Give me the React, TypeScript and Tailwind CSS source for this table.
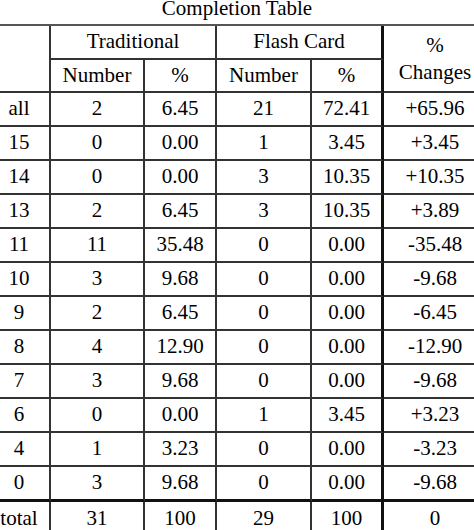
import React from 'react';

const rows: string[][] = [
  ['all', '2', '6.45', '21', '72.41', '+65.96'],
  ['15', '0', '0.00', '1', '3.45', '+3.45'],
  ['14', '0', '0.00', '3', '10.35', '+10.35'],
  ['13', '2', '6.45', '3', '10.35', '+3.89'],
  ['11', '11', '35.48', '0', '0.00', '-35.48'],
  ['10', '3', '9.68', '0', '0.00', '-9.68'],
  ['9', '2', '6.45', '0', '0.00', '-6.45'],
  ['8', '4', '12.90', '0', '0.00', '-12.90'],
  ['7', '3', '9.68', '0', '0.00', '-9.68'],
  ['6', '0', '0.00', '1', '3.45', '+3.23'],
  ['4', '1', '3.23', '0', '0.00', '-3.23'],
  ['0', '3', '9.68', '0', '0.00', '-9.68'],
];

const total = ['total', '31', '100', '29', '100', '0'];

// right-hand rule for each column
const rightBorder = [
  'border-r-2 border-r-[#333333]',
  'border-r-2 border-r-[#333333]',
  'border-r-2 border-r-[#333333]',
  'border-r-2 border-r-[#333333]',
  'border-r-[3px] border-r-[#111111]',
  '',
];

export default function App() {
  return (
    <div className="w-[474px] h-[530px] overflow-hidden bg-white text-black text-[21px] font-['Liberation_Serif',serif]">
      <div className="h-[24px] text-center leading-[16px]">Completion Table</div>

      <table className="-ml-[11px] w-[497px] table-fixed border-separate border-spacing-0 border-t-2 border-t-[#555555]">
        <colgroup>
          <col className="w-[62px]" />
          <col className="w-[94px]" />
          <col className="w-[72px]" />
          <col className="w-[95px]" />
          <col className="w-[72px]" />
          <col className="w-[102px]" />
        </colgroup>
        <thead>
          <tr>
            <th rowSpan={2} className="p-0 font-normal border-r-2 border-r-[#333333] border-b-2 border-b-[#333333]"></th>
            <th colSpan={2} className="h-[33px] p-0 font-normal text-center border-r-2 border-r-[#333333] border-b-2 border-b-[#333333]">
              Traditional
            </th>
            <th colSpan={2} className="h-[33px] p-0 font-normal text-center border-r-[3px] border-r-[#111111] border-b-2 border-b-[#333333]">
              Flash Card
            </th>
            <th rowSpan={2} className="p-0 font-normal text-center leading-[27px] border-b-2 border-b-[#333333]">
              %<br />Changes
            </th>
          </tr>
          <tr>
            <th className="h-[33px] p-0 font-normal text-center border-r-2 border-r-[#333333] border-b-2 border-b-[#333333]">Number</th>
            <th className="h-[33px] p-0 font-normal text-center border-r-2 border-r-[#333333] border-b-2 border-b-[#333333]">%</th>
            <th className="h-[33px] p-0 font-normal text-center border-r-2 border-r-[#333333] border-b-2 border-b-[#333333]">Number</th>
            <th className="h-[33px] p-0 font-normal text-center border-r-[3px] border-r-[#111111] border-b-2 border-b-[#333333]">%</th>
          </tr>
        </thead>
        <tbody>
          {rows.map((r, i) => {
            const last = i === rows.length - 1;
            return (
              <tr key={i}>
                {r.map((v, j) => (
                  <td
                    key={j}
                    className={`h-[34px] p-0 text-center align-middle ${rightBorder[j]} ${
                      last ? 'border-b-[3px] border-b-[#111111]' : 'border-b-2 border-b-[#333333]'
                    }`}
                  >
                    {v}
                  </td>
                ))}
              </tr>
            );
          })}
          <tr>
            {total.map((v, j) => (
              <td key={j} className={`h-[34px] p-0 text-center align-middle ${rightBorder[j]}`}>
                {v}
              </td>
            ))}
          </tr>
        </tbody>
      </table>
    </div>
  );
}
